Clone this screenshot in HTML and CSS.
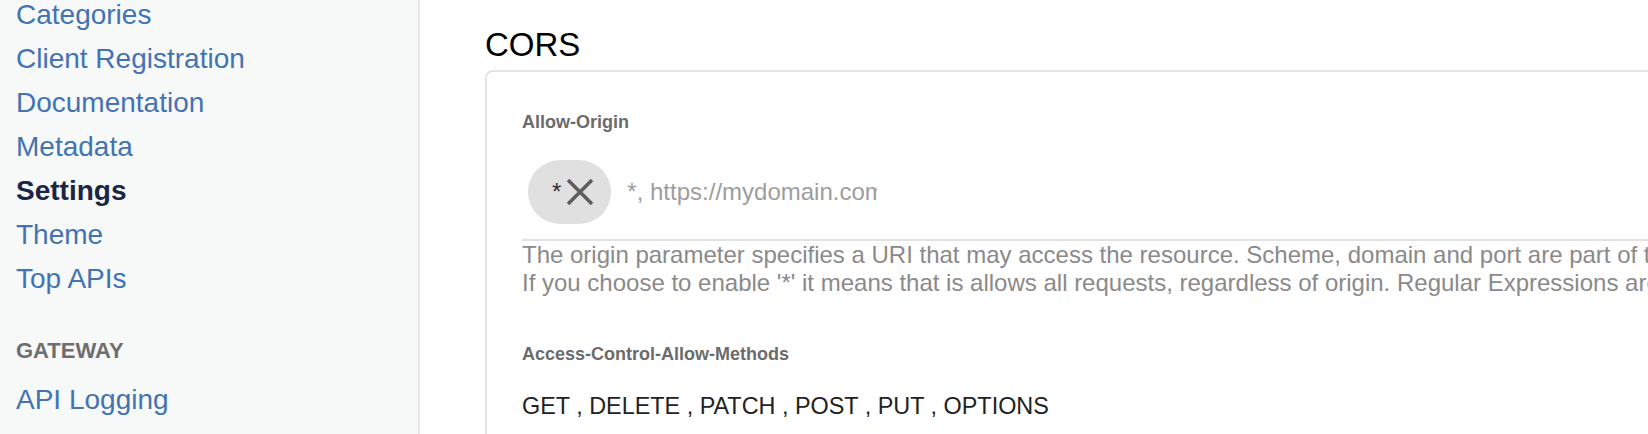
FILE: index.html
```html
<!DOCTYPE html>
<html lang="en">
<head>
<meta charset="utf-8">
<title>CORS Settings</title>
<link rel="stylesheet" href="styles.css">
</head>
<body>
<div class="layout">
  <aside class="sidebar">
    <ul class="nav">
      <li><a class="nav-link" href="#">Categories</a></li>
      <li><a class="nav-link" href="#">Client Registration</a></li>
      <li><a class="nav-link" href="#">Documentation</a></li>
      <li><a class="nav-link" href="#">Metadata</a></li>
      <li><a class="nav-link active" href="#">Settings</a></li>
      <li><a class="nav-link" href="#">Theme</a></li>
      <li><a class="nav-link" href="#">Top APIs</a></li>
    </ul>
    <div class="nav-heading">GATEWAY</div>
    <ul class="nav nav-gateway">
      <li><a class="nav-link" href="#">API Logging</a></li>
    </ul>
  </aside>
  <main class="main">
    <h2 class="title">CORS</h2>
    <section class="card">
      <div class="origin-field">
        <div class="label">Allow-Origin</div>
        <div class="chip-row">
          <span class="chip"><span class="chip-text">*</span><svg class="chip-x" viewBox="0 0 28 28" width="28" height="28"><path d="M2 2 L26 26 M26 2 L2 26" stroke="#5e5e5e" stroke-width="3.6" fill="none"/></svg></span>
          <span class="placeholder">*, https://mydomain.com</span>
        </div>
      </div>
      <div class="help">
        <div class="help-line">The origin parameter specifies a URI that may access the resource. Scheme, domain and port are part of the same-origin definition.</div>
        <div class="help-line">If you choose to enable '*' it means that is allows all requests, regardless of origin. Regular Expressions are also supported.</div>
      </div>
      <div class="label label-methods">Access-Control-Allow-Methods</div>
      <div class="methods">GET , DELETE , PATCH , POST , PUT , OPTIONS</div>
    </section>
  </main>
</div>
</body>
</html>
```
FILE: styles.css
```css
html, body {
  margin: 0;
  padding: 0;
  width: 1648px;
  height: 434px;
  overflow: hidden;
  background: #ffffff;
  font-family: "Liberation Sans", Arial, Helvetica, sans-serif;
}

.layout {
  display: flex;
  height: 434px;
}

.sidebar {
  width: 420px;
  flex: 0 0 420px;
  box-sizing: border-box;
  background: #f7f9f9;
  border-right: 2px solid #e6e7e7;
  padding-left: 16px;
}

.nav {
  list-style: none;
  margin: -7px 0 0 0;
  padding: 0;
}

.nav-link {
  display: block;
  font-size: 28px;
  line-height: 44px;
  color: #4373b2;
  text-decoration: none;
}

.nav-link.active {
  color: #1b2646;
  font-weight: bold;
}

.nav-heading {
  margin-top: 37px;
  font-size: 22px;
  line-height: 26px;
  font-weight: bold;
  color: #6e6e6e;
}

.nav-gateway {
  margin-top: 14px;
}

.main {
  flex: 1;
  padding-left: 65px;
  min-width: 0;
}

.title {
  margin: 26px 0 6px 0;
  font-size: 33px;
  line-height: 38px;
  font-weight: normal;
  color: #000000;
}

.card {
  border: 2px solid #e4e4e4;
  border-right: none;
  border-radius: 8px 0 0 8px;
  padding: 40px 0 0 35px;
  height: 400px;
  box-sizing: border-box;
}

.origin-field {
  border-bottom: 2px solid #e2e2e2;
  padding-bottom: 15px;
}

.label {
  font-size: 18px;
  line-height: 21px;
  font-weight: bold;
  color: #6b6b6b;
}

.chip-row {
  display: flex;
  align-items: center;
  margin-top: 27px;
  margin-left: 6px;
}

.chip {
  display: inline-flex;
  align-items: center;
  height: 64px;
  padding: 0 17px 0 24px;
  border-radius: 32px;
  background: #e0e0e0;
}

.chip-text {
  font-size: 24px;
  line-height: 28px;
  color: #333333;
}

.chip-x {
  display: block;
  margin-left: 5px;
}

.placeholder {
  display: block;
  width: 250px;
  overflow: hidden;
  white-space: nowrap;
  margin-left: 16px;
  font-size: 24px;
  line-height: 28px;
  color: #9d9d9d;
}

.help {
  font-size: 24px;
  line-height: 28px;
  color: #8a8a8a;
}

.help-line {
  white-space: nowrap;
}

.label-methods {
  margin-top: 47px;
}

.methods {
  margin-top: 27px;
  font-size: 23.4px;
  line-height: 28px;
  color: #222222;
}
```
